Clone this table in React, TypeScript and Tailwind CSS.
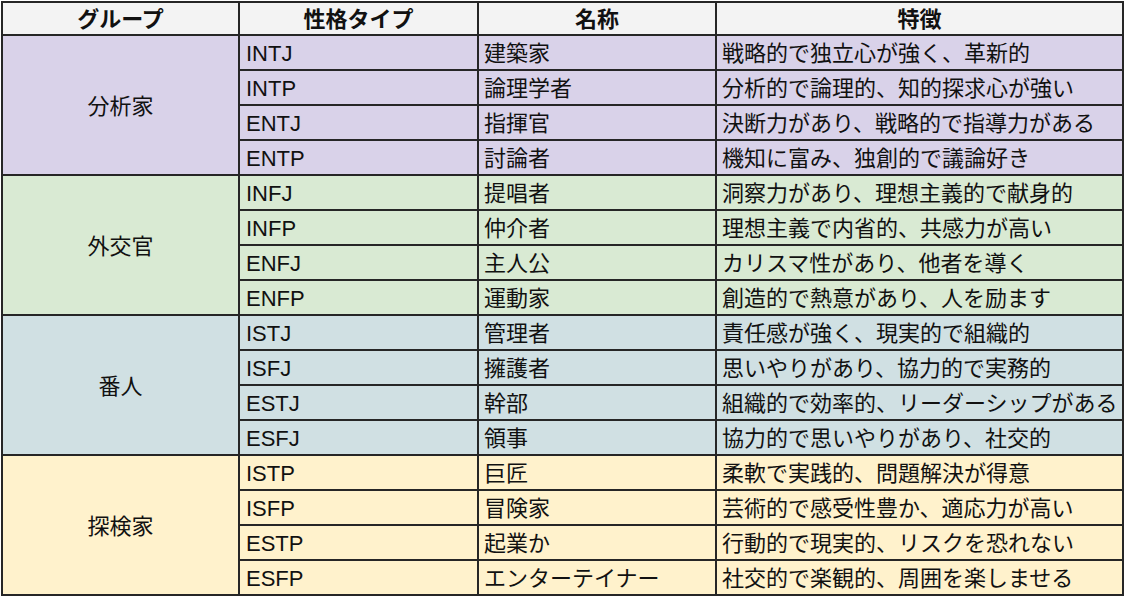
const groups = [
  {
    name: "分析家",
    bg: "bg-[#d9d2e9]",
    rows: [
      ["INTJ", "建築家", "戦略的で独立心が強く、革新的"],
      ["INTP", "論理学者", "分析的で論理的、知的探求心が強い"],
      ["ENTJ", "指揮官", "決断力があり、戦略的で指導力がある"],
      ["ENTP", "討論者", "機知に富み、独創的で議論好き"],
    ],
  },
  {
    name: "外交官",
    bg: "bg-[#d9ead3]",
    rows: [
      ["INFJ", "提唱者", "洞察力があり、理想主義的で献身的"],
      ["INFP", "仲介者", "理想主義で内省的、共感力が高い"],
      ["ENFJ", "主人公", "カリスマ性があり、他者を導く"],
      ["ENFP", "運動家", "創造的で熱意があり、人を励ます"],
    ],
  },
  {
    name: "番人",
    bg: "bg-[#d0e0e3]",
    rows: [
      ["ISTJ", "管理者", "責任感が強く、現実的で組織的"],
      ["ISFJ", "擁護者", "思いやりがあり、協力的で実務的"],
      ["ESTJ", "幹部", "組織的で効率的、リーダーシップがある"],
      ["ESFJ", "領事", "協力的で思いやりがあり、社交的"],
    ],
  },
  {
    name: "探検家",
    bg: "bg-[#fff2cc]",
    rows: [
      ["ISTP", "巨匠", "柔軟で実践的、問題解決が得意"],
      ["ISFP", "冒険家", "芸術的で感受性豊か、適応力が高い"],
      ["ESTP", "起業か", "行動的で現実的、リスクを恐れない"],
      ["ESFP", "エンターテイナー", "社交的で楽観的、周囲を楽しませる"],
    ],
  },
];

const headers = ["グループ", "性格タイプ", "名称", "特徴"];

export default function App() {
  return (
    <div className="bg-white w-[1126px] h-[596px] pl-[1px] pt-[1px] text-[#111] text-[22px] leading-none [font-family:'Liberation_Sans','Noto_Sans_CJK_JP',sans-serif]">
      <div className="inline-grid bg-[#262626] p-[2px] gap-[2px] grid-cols-[235px_237px_236px_405px] grid-rows-[31px_repeat(16,33px)]">
        {headers.map((h) => (
          <div key={h} className="bg-[#f3f3f3] flex items-center justify-center pt-[2px] font-bold">
            {h}
          </div>
        ))}
        {groups.map((g, gi) => (
          <Group key={g.name} group={g} start={gi * 4 + 2} />
        ))}
      </div>
    </div>
  );
}

const rowStarts = [
  "row-start-2",
  "row-start-6",
  "row-start-10",
  "row-start-14",
];

function Group({ group, start }: { group: (typeof groups)[number]; start: number }) {
  const idx = (start - 2) / 4;
  return (
    <>
      <div className={`${group.bg} ${rowStarts[idx]} col-start-1 row-span-4 flex items-center justify-center pt-[3px]`}>
        {group.name}
      </div>
      {group.rows.map(([type, name, desc]) => (
        <div key={type} className="contents">
          <div className={`${group.bg} col-start-2 flex items-center pl-[6px] pt-[3px]`}>{type}</div>
          <div className={`${group.bg} col-start-3 flex items-center pl-[5px] pt-[3px]`}>{name}</div>
          <div className={`${group.bg} col-start-4 flex items-center pl-[5px] pt-[3px]`}>{desc}</div>
        </div>
      ))}
    </>
  );
}
